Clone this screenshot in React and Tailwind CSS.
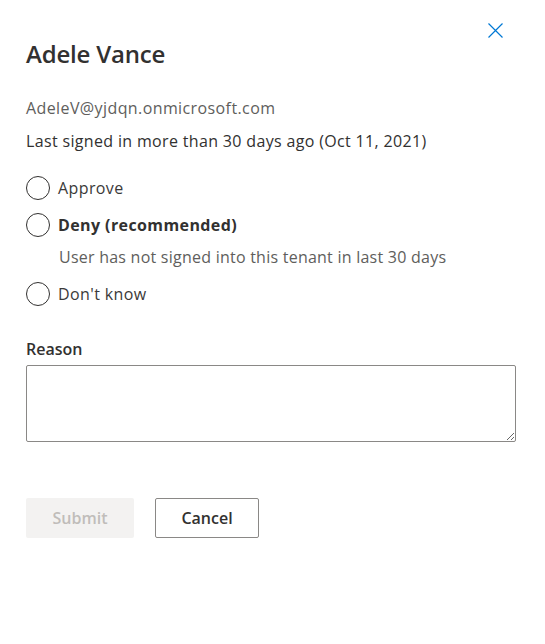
const Radio = ({ label, bold }) => {
    return (
        <label className="flex items-center h-6 cursor-pointer">
            <span className="w-6 h-6 rounded-full border border-[#323130] bg-white shrink-0"></span>
            <span
                className={
                    bold
                        ? "ml-2 text-[16px] leading-[22px] tracking-[0.4px] font-bold text-[#323130]"
                        : "ml-2 text-[16px] leading-[22px] tracking-[0.4px] text-[#3b3a39]"
                }
            >
                {label}
            </span>
        </label>
    );
};

const App = () => {
    return (
        <div className="min-h-screen bg-white font-['Open_Sans',sans-serif] text-[#323130]">
            <div className="px-[26px]">
                <div className="flex justify-between items-start pt-[23px] pr-[16px]">
                    <h2 className="mt-[15px] text-[24px] leading-[32px] font-semibold tracking-[-0.2px] text-[#323130]">
                        Adele Vance
                    </h2>
                    <button className="w-[15px] h-[15px]" aria-label="Close">
                        <svg width="15" height="15" viewBox="0 0 15 15">
                            <path d="M0.5 0.5 L14.5 14.5 M14.5 0.5 L0.5 14.5" stroke="#0078d4" strokeWidth="1.2" fill="none" />
                        </svg>
                    </button>
                </div>

                <div className="mt-[27px] text-[16px] leading-[22px] tracking-[0.4px] text-[#605e5c]">
                    AdeleV@yjdqn.onmicrosoft.com
                </div>
                <div className="mt-[11px] text-[16px] leading-[22px] tracking-[0.34px] text-[#323130]">
                    Last signed in more than 30 days ago (Oct 11, 2021)
                </div>

                <div className="mt-[24px]">
                    <Radio label="Approve" />
                </div>
                <div className="mt-[13px]">
                    <Radio label="Deny (recommended)" bold />
                </div>
                <div className="mt-[9px] ml-[33px] text-[16px] leading-[22px] tracking-[0.24px] text-[#605e5c]">
                    User has not signed into this tenant in last 30 days
                </div>
                <div className="mt-[14px]">
                    <Radio label="Don't know" />
                </div>

                <div className="mt-[32px] text-[16px] leading-[22px] font-semibold text-[#323130]">
                    Reason
                </div>
                <textarea className="mt-[5px] block w-[490px] h-[77px] border border-[#8a8886] rounded-[2px] px-2 py-1 text-[16px] outline-none"></textarea>

                <div className="mt-[56px] flex gap-[21px]">
                    <button
                        disabled
                        className="w-[108px] h-[40px] rounded-[2px] bg-[#f3f2f1] text-[16px] font-semibold text-[#c0bdba]"
                    >
                        Submit
                    </button>
                    <button className="w-[104px] h-[40px] rounded-[2px] border border-[#8a8886] bg-white text-[16px] font-semibold text-[#323130]">
                        Cancel
                    </button>
                </div>
            </div>
        </div>
    );
};

export default App;
